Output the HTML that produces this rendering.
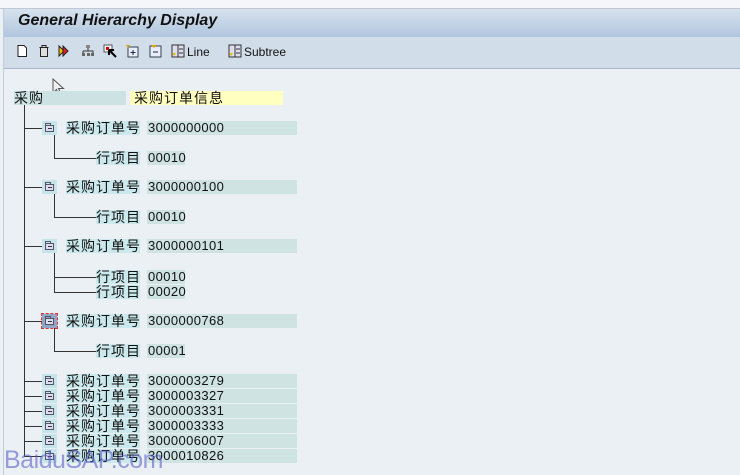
<!DOCTYPE html>
<html><head><meta charset="utf-8"><style>
*{margin:0;padding:0;box-sizing:border-box}
body{width:740px;height:475px;overflow:hidden;background:#ebf0f5;position:relative;font-family:"Liberation Sans","Noto Sans CJK SC",sans-serif;}
.a{position:absolute}
.hl{position:absolute;height:1px;background:#333}
.vl{position:absolute;width:1px;background:#333}
.ic{position:absolute;left:42px;width:15px;height:14px;background:#c6e5ea}
.ic i{position:absolute;left:3px;top:4px;width:9px;height:7px;border:1px solid #556;background:#dde;}
.ic i:before{content:"";position:absolute;left:-1px;top:-3px;width:4px;height:2px;border:1px solid #556;border-bottom:none}
.ic i:after{content:"";position:absolute;left:2px;top:2px;width:4px;height:1px;background:#334}
.lb{position:absolute;left:66px;width:74px;height:14px;background:#cbe8ec;font-size:14px;line-height:14px;color:#111;letter-spacing:1px;white-space:nowrap}
.nm{position:absolute;left:147px;width:150px;height:14px;background:#cfe3e3;font-size:13px;line-height:14px;color:#111;padding-left:1px;letter-spacing:0.4px;white-space:nowrap}
.cl{position:absolute;left:96px;width:44px;height:14px;background:#cbe8ec;font-size:14px;line-height:14px;color:#111;letter-spacing:1px;white-space:nowrap}
.cn{position:absolute;left:147px;width:38px;height:14px;background:#cfe3e3;font-size:13px;line-height:14px;color:#111;padding-left:1px;letter-spacing:0.4px}
.tb{position:absolute;top:44px;width:14px;height:14px}
</style></head><body>
<div class="a" style="left:0;top:0;width:740px;height:8px;background:#f4f6fa"></div>
<div class="a" style="left:0;top:8px;width:740px;height:1px;background:#c0c8d4"></div>
<div class="a" style="left:3px;top:9px;width:737px;height:28px;background:linear-gradient(#d6e2ee,#b0c6de)"></div>
<div class="a" style="left:18px;top:12px;font-size:16px;font-weight:bold;font-style:italic;color:#111">General Hierarchy Display</div>
<div class="a" style="left:3px;top:37px;width:737px;height:31px;background:#d1dde8"></div>
<div class="a" style="left:3px;top:68px;width:737px;height:1px;background:#a8b8cc"></div>
<div class="a" style="left:3px;top:9px;width:1px;height:466px;background:#c2ccd8"></div>

<svg class="tb" style="left:15px" viewBox="0 0 14 14"><path d="M3 1.5h6l2.5 2.5v8.5h-8.5z" fill="#fff" stroke="#222"/></svg>
<svg class="tb" style="left:37px" viewBox="0 0 14 14"><path d="M2.5 3.5h9M5 3.5v-2h4v2M3.5 4v8.5h7V4" fill="#ddd" stroke="#222"/></svg>
<svg class="tb" style="left:58px" viewBox="0 0 14 14"><path d="M1 2l5 5-5 5z" fill="#f0c000" stroke="#222"/><path d="M5 2l5 5-5 5z" fill="#e02020" stroke="#222"/></svg>
<svg class="tb" style="left:81px" viewBox="0 0 14 14"><rect x="5" y="1" width="4" height="3" fill="#888"/><rect x="1" y="9" width="3" height="3" fill="#666"/><rect x="6" y="9" width="3" height="3" fill="#666"/><rect x="10" y="9" width="3" height="3" fill="#666"/><path d="M7 4v3M2 7h10v2M2 7v2" stroke="#333" fill="none"/></svg>
<svg class="tb" style="left:103px" viewBox="0 0 14 14"><rect x="1" y="1" width="8" height="7" fill="#fff" stroke="#555"/><rect x="3" y="3" width="3" height="3" fill="#d00"/><path d="M6 6l7 7M6 6v5M6 6h5" stroke="#000" stroke-width="2"/></svg>
<svg class="tb" style="left:125px" viewBox="0 0 14 14"><rect x="3" y="3" width="10" height="10" fill="#e8eef8" stroke="#345"/><path d="M8 6v5M5.5 8.5h5" stroke="#224"/><path d="M1 1h4l-2 3z" fill="#e0a000"/></svg>
<svg class="tb" style="left:148px" viewBox="0 0 14 14"><rect x="2" y="2" width="11" height="11" fill="#e8eef8" stroke="#345"/><path d="M5 8h5" stroke="#224"/><path d="M3 1h6l-3 3z" fill="#e0a000"/></svg>
<svg class="tb" style="left:171px" viewBox="0 0 14 14"><rect x="1" y="1" width="12" height="12" fill="#dde" stroke="#333"/><path d="M7 1v12M8 5h4M8 9h4" stroke="#333"/><path d="M1 9h4l-2 3z" fill="#e0c000"/></svg>
<div class="a" style="left:187px;top:45px;font-size:12px;color:#111">Line</div>
<svg class="tb" style="left:228px" viewBox="0 0 14 14"><rect x="1" y="1" width="12" height="12" fill="#dde" stroke="#333"/><path d="M7 1v12M8 5h4M8 9h4" stroke="#333"/><path d="M1 9h4l-2 3z" fill="#e0c000"/></svg>
<div class="a" style="left:244px;top:45px;font-size:12px;color:#111">Subtree</div>

<svg class="a" style="left:52px;top:78px" width="14" height="20" viewBox="0 0 14 20"><path d="M1 1v14l3.5-3.5 3 6 2-1-3-6h5z" fill="#f0f0f0" stroke="#555"/></svg>

<div class="a" style="left:14px;top:91px;width:112px;height:14px;background:#cde3e3"></div>
<div class="a" style="left:14px;top:91px;font-size:14px;line-height:14px;color:#111;letter-spacing:1px">采购</div>
<div class="a" style="left:130px;top:91px;width:153px;height:14px;background:#ffffc0;font-size:14px;line-height:14px;color:#111;padding-left:4px;letter-spacing:1px">采购订单信息</div>

<div class="vl" style="left:24px;top:105px;height:352px"></div>

<div class="hl" style="left:24px;top:128px;width:18px"></div><div class="ic" style="top:121px"><i></i></div><div class="lb" style="top:121px">采购订单号</div><div class="nm" style="top:121px">3000000000</div>
<div class="vl" style="left:54px;top:135px;height:23px"></div><div class="hl" style="left:54px;top:158px;width:42px"></div><div class="cl" style="top:151px">行项目</div><div class="cn" style="top:151px">00010</div>

<div class="hl" style="left:24px;top:187px;width:18px"></div><div class="ic" style="top:180px"><i></i></div><div class="lb" style="top:180px">采购订单号</div><div class="nm" style="top:180px">3000000100</div>
<div class="vl" style="left:54px;top:194px;height:23px"></div><div class="hl" style="left:54px;top:217px;width:42px"></div><div class="cl" style="top:210px">行项目</div><div class="cn" style="top:210px">00010</div>

<div class="hl" style="left:24px;top:246px;width:18px"></div><div class="ic" style="top:239px"><i></i></div><div class="lb" style="top:239px">采购订单号</div><div class="nm" style="top:239px">3000000101</div>
<div class="vl" style="left:54px;top:253px;height:39px"></div><div class="hl" style="left:54px;top:277px;width:42px"></div><div class="cl" style="top:270px">行项目</div><div class="cn" style="top:270px">00010</div>
<div class="hl" style="left:54px;top:292px;width:42px"></div><div class="cl" style="top:285px">行项目</div><div class="cn" style="top:285px">00020</div>

<div class="hl" style="left:24px;top:321px;width:18px"></div><div class="ic" style="top:314px;background:#8fa6c6;outline:1px dashed #e03030"><i></i></div><div class="lb" style="top:314px">采购订单号</div><div class="nm" style="top:314px">3000000768</div>
<div class="vl" style="left:54px;top:328px;height:23px"></div><div class="hl" style="left:54px;top:351px;width:42px"></div><div class="cl" style="top:344px">行项目</div><div class="cn" style="top:344px">00001</div>

<div class="hl" style="left:24px;top:381px;width:18px"></div><div class="ic" style="top:374px"><i></i></div><div class="lb" style="top:374px">采购订单号</div><div class="nm" style="top:374px">3000003279</div>
<div class="hl" style="left:24px;top:396px;width:18px"></div><div class="ic" style="top:389px"><i></i></div><div class="lb" style="top:389px">采购订单号</div><div class="nm" style="top:389px">3000003327</div>
<div class="hl" style="left:24px;top:411px;width:18px"></div><div class="ic" style="top:404px"><i></i></div><div class="lb" style="top:404px">采购订单号</div><div class="nm" style="top:404px">3000003331</div>
<div class="hl" style="left:24px;top:426px;width:18px"></div><div class="ic" style="top:419px"><i></i></div><div class="lb" style="top:419px">采购订单号</div><div class="nm" style="top:419px">3000003333</div>
<div class="hl" style="left:24px;top:441px;width:18px"></div><div class="ic" style="top:434px"><i></i></div><div class="lb" style="top:434px">采购订单号</div><div class="nm" style="top:434px">3000006007</div>
<div class="hl" style="left:24px;top:456px;width:18px"></div><div class="ic" style="top:449px"><i></i></div><div class="lb" style="top:449px">采购订单号</div><div class="nm" style="top:449px">3000010826</div>

<div class="a" style="left:4px;top:446px;font-size:25px;color:rgba(90,95,200,0.6);letter-spacing:-0.5px">BaiduSAP.com</div>
</body></html>
